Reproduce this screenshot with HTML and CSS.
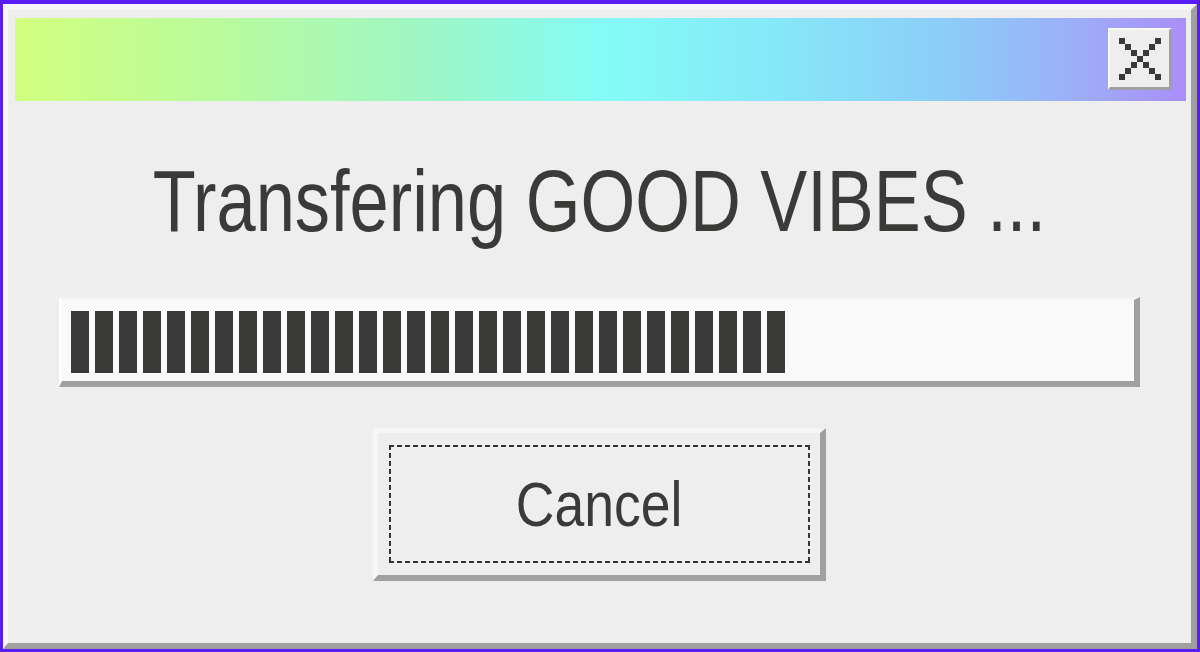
FILE: index.html
```html
<!DOCTYPE html>
<html>
<head>
<meta charset="utf-8">
<title>Transfering GOOD VIBES</title>
<link rel="stylesheet" href="styles.css">
</head>
<body>
<div class="window">
  <div class="titlebar">
    <button class="close" aria-label="Close">
      <svg width="42" height="42" viewBox="0 0 42 42">
        <g fill="#3a3a38">
          <rect x="0" y="0" width="6" height="6"/>
          <rect x="6" y="6" width="6" height="6"/>
          <rect x="12" y="12" width="6" height="6"/>
          <rect x="18" y="18" width="6" height="6"/>
          <rect x="24" y="24" width="6" height="6"/>
          <rect x="30" y="30" width="6" height="6"/>
          <rect x="36" y="36" width="6" height="6"/>
          <rect x="36" y="0" width="6" height="6"/>
          <rect x="30" y="6" width="6" height="6"/>
          <rect x="24" y="12" width="6" height="6"/>
          <rect x="12" y="24" width="6" height="6"/>
          <rect x="6" y="30" width="6" height="6"/>
          <rect x="0" y="36" width="6" height="6"/>
        </g>
      </svg>
    </button>
  </div>
  <h1 class="heading"><span class="pixel">Transfering GOOD VIBES ...</span></h1>
  <div class="progress">
    <div class="seg"></div><div class="seg"></div><div class="seg"></div><div class="seg"></div><div class="seg"></div>
    <div class="seg"></div><div class="seg"></div><div class="seg"></div><div class="seg"></div><div class="seg"></div>
    <div class="seg"></div><div class="seg"></div><div class="seg"></div><div class="seg"></div><div class="seg"></div>
    <div class="seg"></div><div class="seg"></div><div class="seg"></div><div class="seg"></div><div class="seg"></div>
    <div class="seg"></div><div class="seg"></div><div class="seg"></div><div class="seg"></div><div class="seg"></div>
    <div class="seg"></div><div class="seg"></div><div class="seg"></div><div class="seg"></div><div class="seg"></div>
  </div>
  <div class="actions">
    <button class="cancel"><span class="focus"></span><span class="pixel small">Cancel</span></button>
  </div>
</div>
</body>
</html>
```
FILE: styles.css
```css
html, body {
  margin: 0;
  padding: 0;
}
body {
  width: 1200px;
  height: 652px;
  box-sizing: border-box;
  background: #5a1ef4;
  padding: 4px 3px 3px 3px;
  overflow: hidden;
  font-family: "Liberation Sans", Arial, sans-serif;
  color: #3a3a38;
}
.window {
  height: 645px;
  box-sizing: border-box;
  background: #eeeeee;
  border-top: 6px solid #f6f6f6;
  border-left: 5px solid #f8f8f8;
  border-right: 6px solid #a0a0a0;
  border-bottom: 6px solid #a0a0a0;
  display: flex;
  flex-direction: column;
  align-items: center;
}
.titlebar {
  align-self: stretch;
  margin: 8px 5px 0 7px;
  height: 83px;
  background: linear-gradient(90deg, #d2ff7e 0%, #b8fb9e 18%, #9cf6c8 36%, #84fcf6 50%, #86e8f8 65%, #8cccf8 80%, #9cb0f8 90%, #aa8ef8 100%);
  display: flex;
  align-items: center;
  justify-content: flex-end;
  padding-right: 14px;
}
.close {
  width: 64px;
  height: 62px;
  margin-top: -1px;
  box-sizing: border-box;
  padding: 0;
  background: #eeeeee;
  border-top: 2px solid #fafafa;
  border-left: 2px solid #fafafa;
  border-right: 3px solid #a0a0a0;
  border-bottom: 3px solid #a0a0a0;
  display: flex;
  align-items: center;
  justify-content: center;
}
.close svg {
  display: block;
  margin: 1px 0 0 1px;
}
.pixel {
  display: inline-block;
  transform: scaleX(0.8);
  transform-origin: center;
  white-space: nowrap;
}
.heading {
  margin: 56px 0 0 0;
  font-weight: normal;
  font-size: 88px;
  line-height: 88px;
  height: 88px;
  text-align: center;
}
.progress {
  margin-top: 52px;
  width: 1081px;
  height: 90px;
  box-sizing: border-box;
  background: #fafafa;
  border-top: 3px solid #f3f3f3;
  border-left: 3px solid #ffffff;
  border-right: 6px solid #a0a0a0;
  border-bottom: 6px solid #a0a0a0;
  padding: 11px 0 8px 9px;
  display: flex;
  gap: 6px;
}
.seg {
  width: 18px;
  height: 62px;
  background: #3a3a38;
}
.actions {
  margin-top: 41px;
  display: flex;
  justify-content: center;
}
.cancel {
  position: relative;
  width: 453px;
  height: 153px;
  box-sizing: border-box;
  padding: 0;
  background: #eeeeee;
  border-top: 5px solid #f6f6f6;
  border-left: 5px solid #f6f6f6;
  border-right: 6px solid #a0a0a0;
  border-bottom: 6px solid #a0a0a0;
  font-family: "Liberation Sans", Arial, sans-serif;
  color: #3a3a38;
  display: flex;
  align-items: center;
  justify-content: center;
}
.small {
  font-size: 63px;
  line-height: 63px;
  transform: scaleX(0.85);
}
.focus {
  position: absolute;
  left: 11px;
  top: 12px;
  right: 10px;
  bottom: 12px;
  background:
    repeating-linear-gradient(90deg, #333 0 5px, transparent 5px 8px) top left / 100% 2px no-repeat,
    repeating-linear-gradient(90deg, #333 0 5px, transparent 5px 8px) bottom left / 100% 2px no-repeat,
    repeating-linear-gradient(180deg, #333 0 5px, transparent 5px 8px) top left / 2px 100% no-repeat,
    repeating-linear-gradient(180deg, #333 0 5px, transparent 5px 8px) top right / 2px 100% no-repeat;
}
```
